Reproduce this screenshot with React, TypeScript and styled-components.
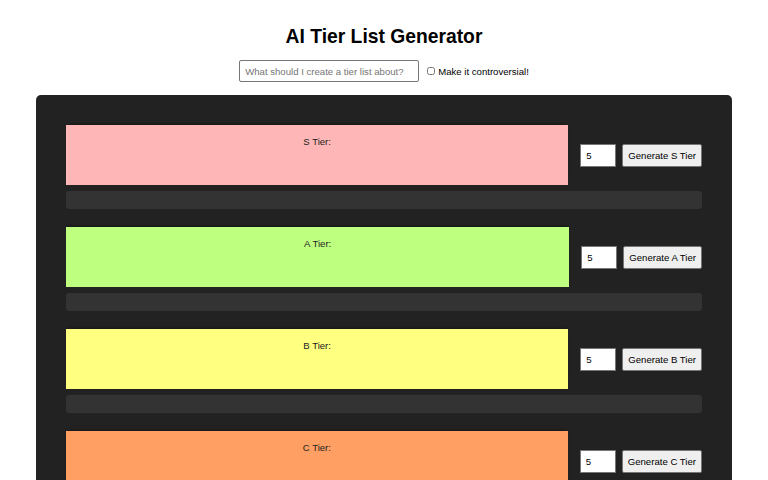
import { createGlobalStyle, styled } from 'styled-components';

const GlobalStyle = createGlobalStyle`
  body {
    margin: 0;
    background: #fff;
    font-family: "Liberation Sans", Arial, sans-serif;
  }
`;

const Page = styled.div`
  display: flex;
  flex-direction: column;
  align-items: center;
  padding: 0 36px;
`;

const Title = styled.h1`
  font-size: 19.3px;
  font-weight: bold;
  margin: 25px 0 12px;
  line-height: 23px;
`;

const Controls = styled.div`
  display: flex;
  align-items: center;
  gap: 8px;
  margin-bottom: 13px;
`;

const TopicInput = styled.input`
  width: 180px;
  height: 22px;
  box-sizing: border-box;
  border: 1px solid #767676;
  border-radius: 2px;
  padding: 0 5px;
  font-size: 9.6px;
  font-family: "Liberation Sans", Arial, sans-serif;
  &::placeholder {
    color: #757575;
  }
`;

const CheckLabel = styled.label`
  display: flex;
  align-items: center;
  gap: 3px;
  font-size: 9.6px;
  input {
    width: 8px;
    height: 8px;
    margin: 0;
  }
`;

const Board = styled.div`
  align-self: stretch;
  background: #222;
  border-radius: 5px;
  padding: 30px 30px 0;
  display: flex;
  flex-direction: column;
  gap: 18px;
`;

const TierSection = styled.div`
  display: flex;
  flex-direction: column;
  gap: 6px;
`;

const TierRow = styled.div`
  display: flex;
  align-items: center;
`;

const TierBox = styled.div<{ $color: string }>`
  flex: 1;
  height: 60px;
  background: ${p => p.$color};
  text-align: center;
  font-size: 9.6px;
  padding-top: 11px;
  box-sizing: border-box;
  color: #222;
  box-shadow: 0 -3px 3px -2px rgba(0, 0, 0, 0.35);
`;

const CountInput = styled.input`
  width: 36px;
  height: 23px;
  box-sizing: border-box;
  margin-left: 12px;
  border: 1px solid #767676;
  padding: 0 5px;
  font-size: 9.6px;
  font-family: "Liberation Sans", Arial, sans-serif;
`;

const GenButton = styled.button`
  height: 23px;
  margin-left: 6px;
  padding: 0 5px;
  border: 1px solid #767676;
  border-radius: 2px;
  background: #efefef;
  font-size: 9.6px;
  font-family: "Liberation Sans", Arial, sans-serif;
  color: #000;
`;

const Results = styled.div`
  height: 18px;
  background: #333;
  border-radius: 3px;
`;

const tiers = [
  { name: 'S', color: '#ffb6b6' },
  { name: 'A', color: '#bfff80' },
  { name: 'B', color: '#ffff80' },
  { name: 'C', color: '#ff9f63' },
];

const App = () => {
  return (
    <>
      <GlobalStyle />
      <Page>
        <Title>AI Tier List Generator</Title>
        <Controls>
          <TopicInput placeholder="What should I create a tier list about?" />
          <CheckLabel>
            <input type="checkbox" />
            Make it controversial!
          </CheckLabel>
        </Controls>
        <Board>
          {tiers.map(t => (
            <TierSection key={t.name}>
              <TierRow>
                <TierBox $color={t.color}>{t.name} Tier:</TierBox>
                <CountInput type="number" defaultValue={5} />
                <GenButton>Generate {t.name} Tier</GenButton>
              </TierRow>
              <Results />
            </TierSection>
          ))}
        </Board>
      </Page>
    </>
  );
};

export default App;
